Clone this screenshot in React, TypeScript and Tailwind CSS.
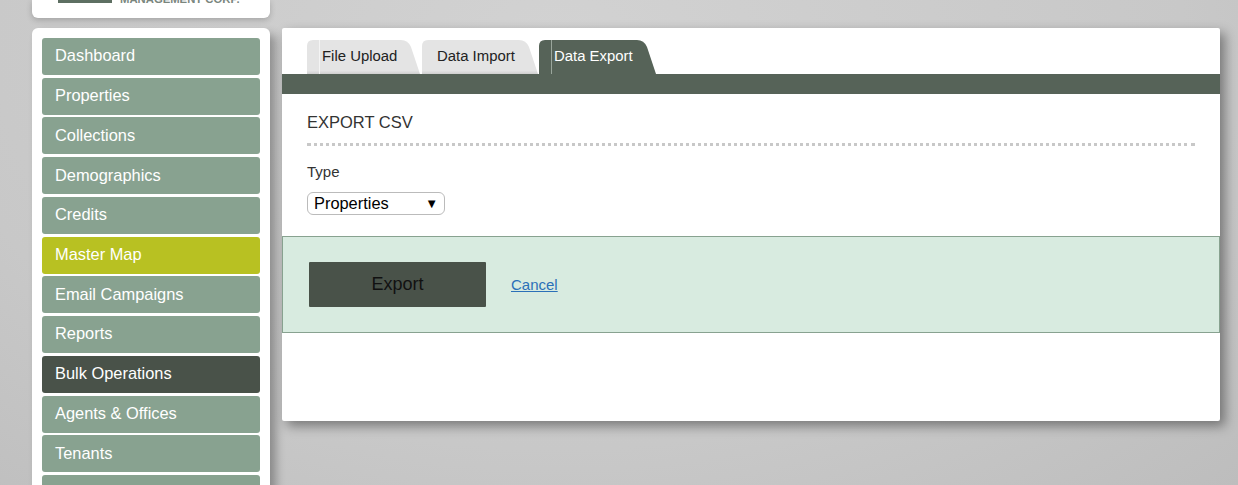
const navItems = [
  { label: 'Dashboard', bg: 'bg-[#88a290]' },
  { label: 'Properties', bg: 'bg-[#88a290]' },
  { label: 'Collections', bg: 'bg-[#88a290]' },
  { label: 'Demographics', bg: 'bg-[#88a290]' },
  { label: 'Credits', bg: 'bg-[#88a290]' },
  { label: 'Master Map', bg: 'bg-[#b8c122]' },
  { label: 'Email Campaigns', bg: 'bg-[#88a290]' },
  { label: 'Reports', bg: 'bg-[#88a290]' },
  { label: 'Bulk Operations', bg: 'bg-[#495249]' },
  { label: 'Agents & Offices', bg: 'bg-[#88a290]' },
  { label: 'Tenants', bg: 'bg-[#88a290]' },
  { label: '', bg: 'bg-[#88a290]' },
];

export default function App() {
  return (
    <div className="h-[485px] w-[1238px] overflow-hidden bg-[radial-gradient(ellipse_at_45%_8%,#d2d2d2,#c8c8c8_65%,#bdbdbd)] font-['Liberation_Sans',Arial,sans-serif]">
      <div className="flex gap-3 pl-8">
        <div className="w-[238px] shrink-0">
          <div className="flex h-[18px] items-start gap-2 overflow-hidden rounded-b-md bg-white pl-[26px] shadow-[0_2px_6px_rgba(0,0,0,0.2)]">
            <div className="h-[3px] w-[54px] bg-[#5d6f62]" />
            <span className="-mt-[6px] text-[11.3px] leading-[11px] font-bold text-[#7a867e]">MANAGEMENT CORP.</span>
          </div>
          <nav className="mt-[10px] flex h-[480px] flex-col gap-[2.72px] rounded-t-md bg-white px-2.5 pt-[10.05px] shadow-[6px_6px_10px_rgba(0,0,0,0.3)]">
            {navItems.map((item, i) => (
              <a key={i} className={`flex h-[37px] shrink-0 items-center rounded-[3px] pb-[1.6px] pl-[13px] text-[16.4px] text-white ${item.bg}`}>
                {item.label}
              </a>
            ))}
          </nav>
        </div>
        <main className="mt-7 h-[393px] w-[938px] rounded-[2px] bg-white shadow-[5px_5px_12px_rgba(0,0,0,0.4)]">
          <div className="flex items-end pt-3 pl-[25px]">
            <div className="relative flex h-[34px] w-[113px] items-center bg-[linear-gradient(#e4e4e4_90%,#cfcfcf)] pb-0.5 pl-[15px] text-[14.9px] text-[#222] [clip-path:path('M0_34V6Q0_0_6_0H94Q101_0_104_7L113_34Z')]">
              <span className="absolute top-0 bottom-0 left-[12px] w-px bg-[#f4f4f4]" />
              File Upload
            </div>
            <div className="ml-[2px] flex h-[34px] w-[116px] items-center bg-[linear-gradient(#e4e4e4_90%,#cfcfcf)] pb-0.5 pl-[15px] text-[14.9px] text-[#222] [clip-path:path('M0_34V6Q0_0_6_0H97Q104_0_107_7L116_34Z')]">
              Data Import
            </div>
            <div className="relative ml-[1px] flex h-[34px] w-[117px] items-center bg-[#566358] pb-0.5 pl-[15px] text-[14.9px] text-white [clip-path:path('M0_34V6Q0_0_6_0H98Q105_0_108_7L117_34Z')]">
              <span className="absolute top-0 bottom-0 left-[12px] w-px bg-[#9aa69c]" />
              Data Export
            </div>
          </div>
          <div className="h-5 bg-[#566358]" />
          <div className="px-[25px] pt-[19px]">
            <h2 className="text-[16.5px] leading-[18px] text-[#333]">EXPORT CSV</h2>
            <div className="mt-3 border-t-[3px] border-dotted border-[#c8c8c8]" />
            <label className="mt-[18px] block text-[15px] leading-4 text-[#333]">Type</label>
            <div className="mt-3 flex h-[23px] w-[138px] items-center justify-between rounded-[6px] border border-[#bbb] pr-[6px] pl-1.5 text-[16.4px] text-black">
              <span>Properties</span>
              <span className="text-[13px] leading-none">▼</span>
            </div>
          </div>
          <div className="mt-[21px] flex h-[97px] items-center gap-[25px] border border-[#88a290] bg-[#d8ebe0] pl-[26px]">
            <button className="h-[45px] w-[177px] rounded-[1px] bg-[#495249] text-[18px] text-[#111]">Export</button>
            <a className="mt-px text-[15px] text-[#2b70b8] underline">Cancel</a>
          </div>
        </main>
      </div>
    </div>
  );
}
